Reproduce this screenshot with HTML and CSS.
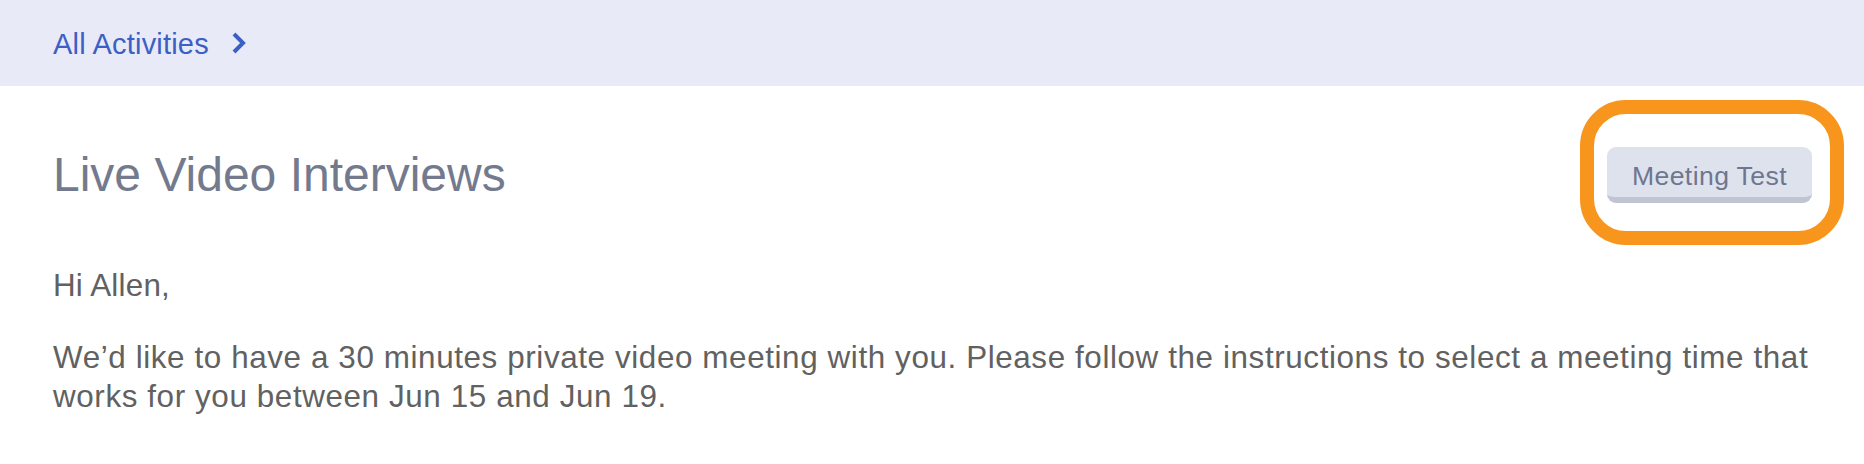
FILE: index.html
```html
<!DOCTYPE html>
<html lang="en">
<head>
<meta charset="utf-8">
<title>Live Video Interviews</title>
<link rel="stylesheet" href="styles.css">
</head>
<body>
  <nav class="topbar">
    <a class="crumb" href="#">All Activities</a>
    <svg class="chevron" width="16" height="24" viewBox="0 0 16 24" aria-hidden="true">
      <polyline points="3,3 12,12 3,21" fill="none" stroke="#3c5fc6" stroke-width="4" stroke-linejoin="miter"/>
    </svg>
  </nav>
  <main class="content">
    <header class="header">
      <h1 class="title">Live Video Interviews</h1>
      <div class="btn-wrap">
        <button class="btn">Meeting Test</button>
        <span class="highlight"></span>
      </div>
    </header>
    <p class="text greeting">Hi Allen,</p>
    <p class="text">We’d like to have a 30 minutes private video meeting with you. Please follow the instructions to select a meeting time that works for you between Jun 15 and Jun 19.</p>
  </main>
</body>
</html>
```

FILE: styles.css
```css
html, body {
  margin: 0;
  padding: 0;
  background: #ffffff;
  font-family: "Liberation Sans", Arial, sans-serif;
}

.topbar {
  height: 86px;
  box-sizing: border-box;
  background: #e8ebf7;
  display: flex;
  align-items: center;
  padding: 2px 0 0 53px;
  gap: 22px;
}

.crumb {
  color: #3c5fc6;
  text-decoration: none;
  font-size: 29px;
  line-height: 34px;
  letter-spacing: 0.2px;
}

.chevron {
  display: block;
  margin-top: -2px;
}

.content {
  padding: 60px 52px 0 53px;
}

.header {
  display: flex;
  align-items: center;
  justify-content: space-between;
}

.title {
  margin: 0;
  font-weight: normal;
  font-size: 48px;
  line-height: 56px;
  color: #737a8e;
  padding-top: 1px;
}

.btn-wrap {
  position: relative;
  display: flex;
}

.btn {
  font-family: "Liberation Sans", Arial, sans-serif;
  font-size: 26.6px;
  line-height: 28px;
  letter-spacing: 0.4px;
  color: #6e7690;
  background: #dee2ed;
  border: 0;
  border-bottom: 6px solid #c1c5d1;
  border-radius: 9px;
  padding: 15px 25px 7px;
  margin: 0;
}

.highlight {
  position: absolute;
  left: -27px;
  right: -32px;
  top: -47px;
  bottom: -42px;
  border: 14px solid #f8951d;
  border-radius: 46px;
  pointer-events: none;
}

.text {
  margin: 0;
  font-size: 31.4px;
  line-height: 39.5px;
  letter-spacing: 0.6px;
  color: #616161;
}

.greeting {
  margin-top: 63px;
  margin-bottom: 32px;
  letter-spacing: 0.2px;
}
```
